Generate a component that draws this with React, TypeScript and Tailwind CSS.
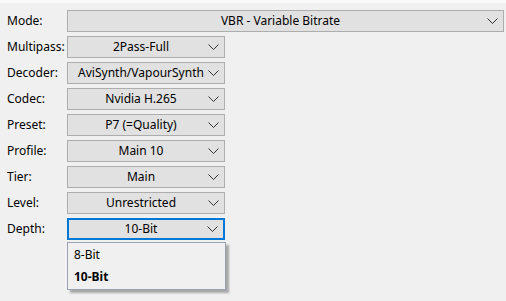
import { useState } from "react";

type Field = {
  label: string;
  value: string;
  wide?: boolean;
  focused?: boolean;
};

const fields: Field[] = [
  { label: "Mode:", value: "VBR - Variable Bitrate", wide: true },
  { label: "Multipass:", value: "2Pass-Full" },
  { label: "Decoder:", value: "AviSynth/VapourSynth" },
  { label: "Codec:", value: "Nvidia H.265" },
  { label: "Preset:", value: "P7 (=Quality)" },
  { label: "Profile:", value: "Main 10" },
  { label: "Tier:", value: "Main" },
  { label: "Level:", value: "Unrestricted" },
  { label: "Depth:", value: "10-Bit", focused: true },
];

function Chevron() {
  return (
    <svg width="11" height="6" viewBox="0 0 11 6" className="shrink-0">
      <polyline points="0.5,0.5 5.5,5.5 10.5,0.5" fill="none" stroke="#333" strokeWidth="1" />
    </svg>
  );
}

function ComboBox({ field, open }: { field: Field; open: boolean }) {
  return (
    <div className={field.wide ? "relative flex-1 mr-[2px]" : "relative w-[158px]"}>
      <div
        className={
          "flex h-[22px] items-center bg-[#e1e1e1] pr-[5px] " +
          (field.focused ? "border-2 border-[#0078d7]" : "border border-[#adadad]")
        }
      >
        <span className="flex-1 text-center pl-[6px] whitespace-nowrap">{field.value}</span>
        <Chevron />
      </div>
      {field.focused && open && (
        <div className="absolute left-0 top-[24px] w-[159px] border border-[#9aa3b5] bg-[#f0f0f0] py-[1px] shadow-[3px_3px_2px_rgba(0,0,0,0.3)]">
          <div className="h-[22px] flex items-center pl-[6px]">8-Bit</div>
          <div className="h-[22px] flex items-center pl-[6px] font-bold">10-Bit</div>
        </div>
      )}
    </div>
  );
}

export default function App() {
  const [open] = useState(true);

  return (
    <div
      className="w-[506px] h-[301px] bg-[#f0f0f0] text-[12px] text-black overflow-hidden"
      style={{ fontFamily: '"Noto Sans", "Open Sans", sans-serif' }}
    >
      <div className="h-[3px] bg-[#f9f9f9]" />
      <div className="flex flex-col gap-[4px] pt-[7px]">
        {fields.map((f) => (
          <div key={f.label} className="flex items-center">
            <div className="w-[67px] pl-[7px]">{f.label}</div>
            <ComboBox field={f} open={open} />
          </div>
        ))}
      </div>
    </div>
  );
}
